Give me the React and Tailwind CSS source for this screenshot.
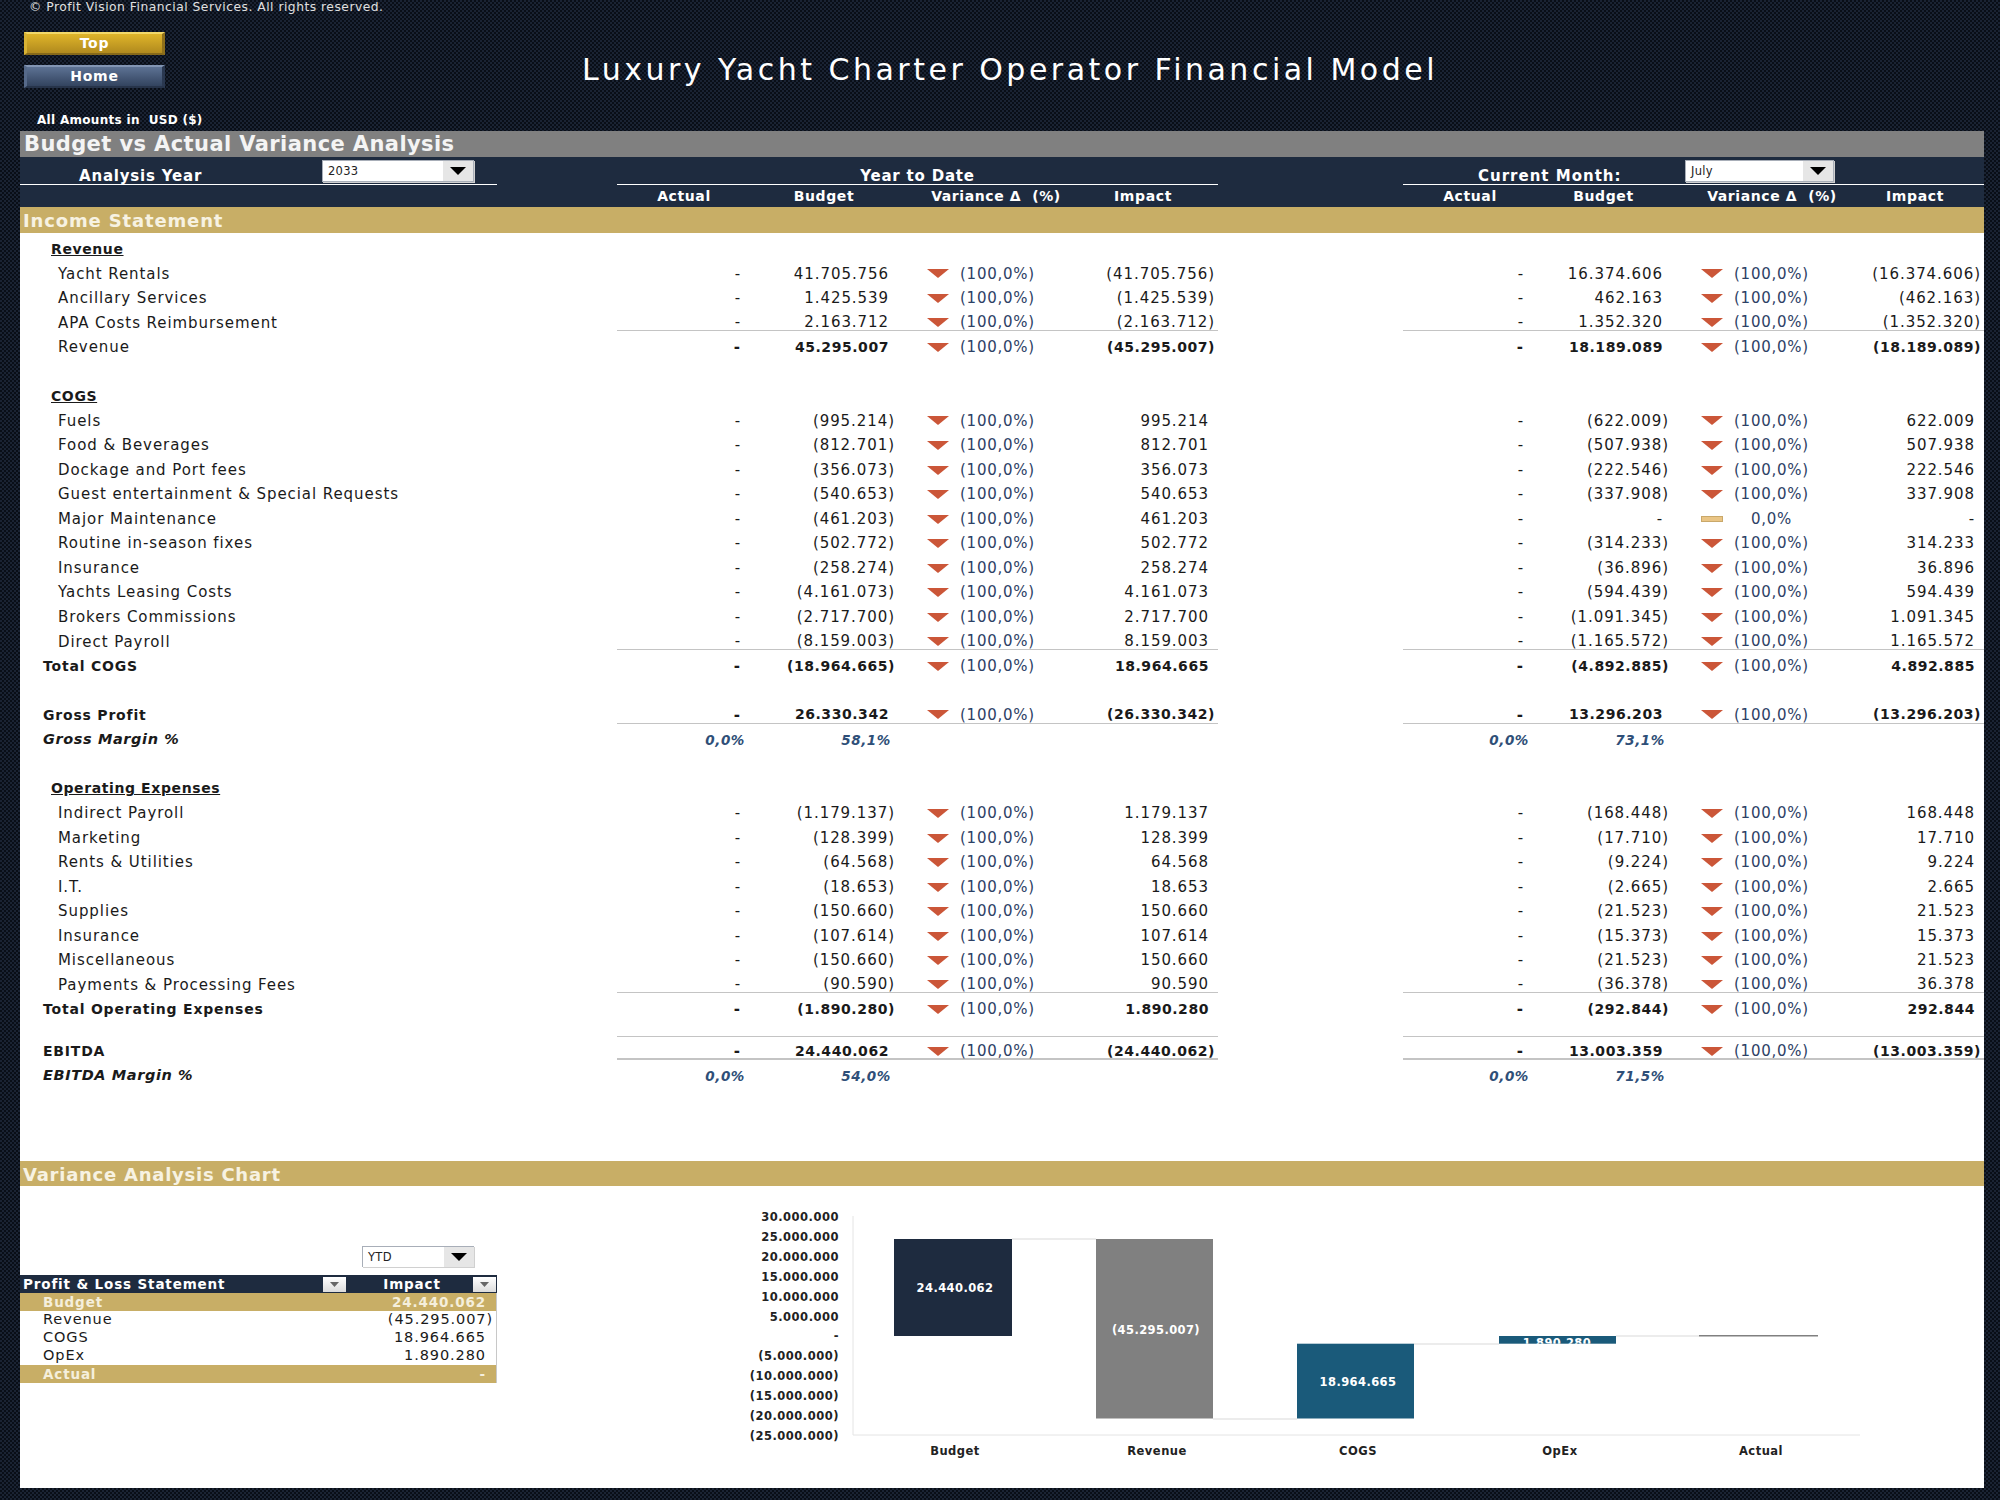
import React from "react";

const P = "(100,0%)";
const rev = [
  ["Yacht Rentals", "41.705.756", "(41.705.756)", "16.374.606", "(16.374.606)"],
  ["Ancillary Services", "1.425.539", "(1.425.539)", "462.163", "(462.163)"],
  ["APA Costs Reimbursement", "2.163.712", "(2.163.712)", "1.352.320", "(1.352.320)"],
];
const cogs = [
  ["Fuels", "(995.214)", "995.214", "(622.009)", "622.009"],
  ["Food & Beverages", "(812.701)", "812.701", "(507.938)", "507.938"],
  ["Dockage and Port fees", "(356.073)", "356.073", "(222.546)", "222.546"],
  ["Guest entertainment & Special Requests", "(540.653)", "540.653", "(337.908)", "337.908"],
  ["Major Maintenance", "(461.203)", "461.203", "-", "-", "zero"],
  ["Routine in-season fixes", "(502.772)", "502.772", "(314.233)", "314.233"],
  ["Insurance", "(258.274)", "258.274", "(36.896)", "36.896"],
  ["Yachts Leasing Costs", "(4.161.073)", "4.161.073", "(594.439)", "594.439"],
  ["Brokers Commissions", "(2.717.700)", "2.717.700", "(1.091.345)", "1.091.345"],
  ["Direct Payroll", "(8.159.003)", "8.159.003", "(1.165.572)", "1.165.572"],
];
const opex = [
  ["Indirect Payroll", "(1.179.137)", "1.179.137", "(168.448)", "168.448"],
  ["Marketing", "(128.399)", "128.399", "(17.710)", "17.710"],
  ["Rents & Utilities", "(64.568)", "64.568", "(9.224)", "9.224"],
  ["I.T.", "(18.653)", "18.653", "(2.665)", "2.665"],
  ["Supplies", "(150.660)", "150.660", "(21.523)", "21.523"],
  ["Insurance", "(107.614)", "107.614", "(15.373)", "15.373"],
  ["Miscellaneous", "(150.660)", "150.660", "(21.523)", "21.523"],
  ["Payments & Processing Fees", "(90.590)", "90.590", "(36.378)", "36.378"],
];

function Arrow() {
  return (
    <svg width="22" height="9" viewBox="0 0 22 9" className="shrink-0">
      <path d="M0 0 H22 L11 9 Z" fill="#cb5638" />
    </svg>
  );
}

function Var({ zero }) {
  return (
    <div className="flex items-center w-full pl-[32px] text-[15px] tracking-[0.75px] font-normal text-[#2d4165]">
      {zero ? (
        <div className="w-[22px] h-[6px] bg-[#eac585] border border-[#c9a86a] shrink-0" />
      ) : (
        <Arrow />
      )}
      <span className={zero ? "ml-[28px]" : "ml-[11px]"}>{zero ? "0,0%" : P}</span>
    </div>
  );
}

function Num({ v, w, end, bold }) {
  const paren = v.endsWith(")");
  return (
    <div
      className={`${w} text-right whitespace-nowrap ${bold ? "font-bold text-[14px] tracking-[0.55px]" : "text-[15px] tracking-[0.93px]"} ${
        paren ? (end ? "pr-[3px]" : "pr-0") : end ? "pr-[9px]" : "pr-[6px]"
      }`}
    >
      {v}
    </div>
  );
}

function Group({ width, cols, a, budget, impact, zero, bold, line }) {
  return (
    <div className={`flex h-full items-center pt-[8px] ${width} ${line || ""}`}>
      <div className={`${cols[0]} text-right pr-[7px] ${bold ? "font-bold" : ""}`}>{a}</div>
      <Num v={budget} w={cols[1]} bold={bold} />
      <div className={cols[2]}>
        <Var zero={zero} />
      </div>
      <Num v={impact} w={cols[3]} end bold={bold} />
    </div>
  );
}

const Y = ["w-[131px]", "w-[147px]", "w-[165px]", "w-[158px]"];
const M = ["w-[128px]", "w-[138px]", "w-[161px]", "w-[154px]"];

function Row({ r, kind, line }) {
  const [label, b, i, mb, mi, z] = r;
  const total = kind === "total";
  const bold = total || kind === "sum";
  return (
    <div className="flex h-[24.54px] text-[15px] tracking-[0.93px] text-[#1a1a1a]">
      <div
        className={`w-[597px] flex items-center pt-[8px] whitespace-nowrap ${
          total ? "pl-[23px] font-bold text-[14px] tracking-[0.8px]" : "pl-[38px]"
        }`}
      >
        {label}
      </div>
      <Group width="w-[601px]" cols={Y} a="-" budget={b} impact={i} bold={bold} line={line} />
      <div className="w-[185px]" />
      <Group width="w-[581px]" cols={M} a="-" budget={mb} impact={mi} zero={z === "zero"} bold={bold} line={line} />
    </div>
  );
}

function Head({ children }) {
  return (
    <div className="h-[24.54px] flex items-center pt-[8px] pl-[31px] font-bold underline text-[14px] tracking-[0.6px] text-[#1a1a1a]">
      {children}
    </div>
  );
}

function Margin({ label, a, b, ma, mb }) {
  const c = "font-bold italic text-[#2f4f78] text-right text-[13.5px] tracking-[0.6px]";
  return (
    <div className="flex h-[24.54px] items-center pt-[8px]">
      <div className="w-[597px] pl-[23px] font-bold italic text-[14.5px] tracking-[0.6px] text-[#1a1a1a]">{label}</div>
      <div className={`w-[128px] ${c}`}>{a}</div>
      <div className={`w-[146px] ${c}`}>{b}</div>
      <div className="w-[512px]" />
      <div className={`w-[126px] ${c}`}>{ma}</div>
      <div className={`w-[136px] ${c}`}>{mb}</div>
    </div>
  );
}

function Spacer() {
  return <div className="h-[24.54px]" />;
}

function Drop({ value, className }) {
  return (
    <div className={`flex bg-white border border-[#a8aeb8] shadow-[1px_1px_0_#d0d0d0] ${className}`}>
      <div className="flex-1 pl-[5px] text-[#222] text-[11.5px] tracking-[0.3px] leading-[21px]">{value}</div>
      <div className="w-[30px] bg-[#e6e6e6] flex items-center justify-center">
        <svg width="16" height="8" viewBox="0 0 16 8">
          <path d="M0 0 H16 L8 8 Z" fill="#000" />
        </svg>
      </div>
    </div>
  );
}

function Filter({ className }) {
  return (
    <div className={`w-[23px] h-[15px] bg-gradient-to-b from-white to-[#dcdcdc] flex items-center justify-center ${className || ""}`}>
      <svg width="9" height="5" viewBox="0 0 9 5">
        <path d="M0 0 H9 L4.5 5 Z" fill="#666" />
      </svg>
    </div>
  );
}

function Btn({ label, top }) {
  return (
    <div
      className={`w-[141px] h-[23px] flex items-center justify-center text-[14px] font-bold tracking-[0.8px] text-white border-t-2 border-b-2 border-l-[3px] border-r-[3px] ${
        top
          ? "bg-gradient-to-b from-[#e0b52a] to-[#b08a1e] border-t-[#f2d86a] border-b-[#86691a] border-l-[#d8b233] border-r-[#8f701b]"
          : "bg-gradient-to-b from-[#5d7294] to-[#33445f] border-t-[#8295b3] border-b-[#27344a] border-l-[#566a8a] border-r-[#2a3850]"
      }`}
    >
      {label}
    </div>
  );
}

const HY = ["w-[134px]", "w-[146px]", "w-[198px]", "w-[96px]"];
const HM = ["w-[134px]", "w-[133px]", "w-[204px]", "w-[82px]"];

function ColHeads({ cols, width }) {
  const names = ["Actual", "Budget", "Variance Δ  (%)", "Impact"];
  return (
    <div className={`flex ${width}`}>
      {names.map((n, i) => (
        <div key={n} className={`${cols[i]} text-center whitespace-pre`}>
          {n}
        </div>
      ))}
    </div>
  );
}

function Chart() {
  const ticks = ["30.000.000","25.000.000","20.000.000","15.000.000","10.000.000","5.000.000","-","(5.000.000)","(10.000.000)","(15.000.000)","(20.000.000)","(25.000.000)"];
  const O = 730, T = 1186;
  const bars = [
    [894, 1012, 1239, 1336, "#1e2b3f"],
    [1096, 1213, 1239, 1418.5, "#808080"],
    [1297, 1414, 1343.7, 1418.5, "#1a5a7a"],
    [1499, 1616, 1336, 1343.7, "#1a5a7a"],
  ];
  const links = [[1012,1096,1239],[1213,1297,1419],[1414,1499,1344],[1616,1699,1336]];
  const labels = [["24.440.062",955,1292],["(45.295.007)",1156,1334],["18.964.665",1358,1386]];
  const cats = [["Budget",955],["Revenue",1157],["COGS",1358],["OpEx",1560],["Actual",1761]];
  return (
    <svg width="1170" height="302" viewBox="0 0 1170 302" className="ml-[233px] shrink-0" style={{ fontFamily: "'DejaVu Sans', sans-serif" }}>
      <path d={`M${853-O} ${1216-T} V${1435-T} H${1860-O}`} fill="none" stroke="#e4e4e4" strokeWidth="1" />
      {links.map(([a,b,y],i)=>(<line key={i} x1={a-O} x2={b-O} y1={y-T} y2={y-T} stroke="#e6e6e6" strokeWidth="1.5" />))}
      {bars.map(([a,b,y1,y2,f],i)=>(<rect key={i} x={a-O} y={y1-T} width={b-a} height={y2-y1} fill={f} />))}
      <rect x={1699-O} y={1335-T} width={119} height={1.5} fill="#808080" />
      {ticks.map((t,i)=>(<text key={t} x={839-O} y={1221-T+i*19.9} textAnchor="end" fontSize="11.5" fontWeight="700" letterSpacing="0.5" fill="#222">{t}</text>))}
      {labels.map(([t,x,y])=>(<text key={t} x={x-O} y={y-T} textAnchor="middle" fontSize="11.5" fontWeight="700" letterSpacing="0.4" fill="#fff">{t}</text>))}
      <svg x={1499-O} y={1336-T} width={117} height={7.7}>
        <text x="58" y="11" textAnchor="middle" fontSize="11.5" fontWeight="700" letterSpacing="0.4" fill="#fff">1.890.280</text>
      </svg>
      {cats.map(([t,x])=>(<text key={t} x={x-O} y={1455-T} textAnchor="middle" fontSize="11.5" fontWeight="700" letterSpacing="0.5" fill="#222">{t}</text>))}
    </svg>
  );
}

function PL() {
  const row = "flex justify-between items-center h-[18px] pl-[23px]";
  const plain = "text-[14.5px] tracking-[0.9px] text-[#1a1a1a]";
  return (
    <div className="w-[477px] pt-[60px] text-[13.5px] tracking-[0.85px] shrink-0">
      <div className="flex justify-end pr-[23px] h-[21px] mb-[8px]">
        <Drop value="YTD" className="w-[112px] h-[21px] border-b-0 border-r-0" />
      </div>
      <div className="flex items-center h-[18px] bg-[#1e2b3f] text-white font-bold pl-[3px]">
        <div className="w-[300px] whitespace-nowrap">Profit &amp; Loss Statement</div>
        <Filter />
        <div className="w-[127px] text-center pl-[5px]">Impact</div>
        <Filter />
      </div>
      <div className="border-r border-[#c8c8c8]">
        <div className={`${row} bg-[#c8ae66] text-[#f5efdc] font-bold pr-[10px]`}><span>Budget</span><span>24.440.062</span></div>
        <div className={`${row} ${plain} pr-[3px]`}><span>Revenue</span><span>(45.295.007)</span></div>
        <div className={`${row} ${plain} pr-[10px]`}><span>COGS</span><span>18.964.665</span></div>
        <div className={`${row} ${plain} pr-[10px]`}><span>OpEx</span><span>1.890.280</span></div>
        <div className={`${row} bg-[#c8ae66] text-[#f5efdc] font-bold pr-[10px]`}><span>Actual</span><span>-</span></div>
      </div>
    </div>
  );
}

export default function App() {
  const totLine = "border-b border-[#c4c4c4]";
  return (
    <div
      className="w-[2000px] h-[1500px] overflow-hidden bg-[#121824] bg-[image:repeating-conic-gradient(#090e17_0_25%,#1a2333_0_50%)] bg-[length:4px_4px] text-white"
      style={{ fontFamily: "'DejaVu Sans', sans-serif" }}
    >
      <div className="h-[131px]">
        <div className="flex pl-[29px] h-[14px] items-center text-[12.3px] tracking-[0.5px] text-[#e0e0e0]">
          © Profit Vision Financial Services. All rights reserved.
        </div>
        <div className="flex">
          <div className="pl-[24px] pt-[18px] flex flex-col gap-[10px] w-[582px]">
            <Btn label="Top" top />
            <Btn label="Home" />
          </div>
          <div className="pt-[33px] text-[30px] tracking-[3.5px] whitespace-nowrap">
            Luxury Yacht Charter Operator Financial Model
          </div>
        </div>
        <div className="pl-[37px] pt-[19px] text-[12px] font-bold tracking-[0.3px] whitespace-pre">All Amounts in  USD ($)</div>
      </div>

      <div className="mx-[20px] w-[1964px]">
        <div className="h-[26px] bg-[#808080] flex items-center pl-[4px] pt-[1px] font-bold text-[21px] tracking-[0.4px] text-[#f4f4f4]">
          Budget vs Actual Variance Analysis
        </div>
        <div className="h-[50px] bg-[#1e2b3f] text-[15px] font-bold tracking-[0.8px]">
          <div className="flex h-[28px]">
            <div className="w-[477px] flex border-b-[1.5px] border-white items-start">
              <div className="w-[302px] pl-[59px] pt-[8px]">Analysis Year</div>
              <Drop value="2033" className="w-[152px] h-[22px] mt-[3px] font-normal" />
            </div>
            <div className="w-[120px]" />
            <div className="w-[601px] border-b-[1.5px] border-white text-center pt-[8px]">Year to Date</div>
            <div className="w-[185px]" />
            <div className="w-[581px] flex border-b-[1.5px] border-white items-start">
              <div className="w-[282px] pl-[75px] pt-[8px] whitespace-nowrap tracking-[1px]">Current Month:</div>
              <Drop value="July" className="w-[149px] h-[22px] mt-[3px] font-normal" />
            </div>
          </div>
          <div className="flex h-[22px] items-center pt-[1px] text-[14px] tracking-[0.6px]">
            <div className="w-[597px]" />
            <ColHeads cols={HY} width="w-[601px]" />
            <div className="w-[185px]" />
            <ColHeads cols={HM} width="w-[581px]" />
          </div>
        </div>
        <div className="h-[26px] bg-[#c8ae66] flex items-center pl-[3px] pt-[1px] font-bold text-[18px] tracking-[0.85px] text-[#f7f2e2]">
          Income Statement
        </div>

        <div className="h-[928px] bg-white">
          <Head>Revenue</Head>
          {rev.map((r, i) => (
            <Row key={r[0]} r={r} line={i === 2 ? totLine : ""} />
          ))}
          <Row r={["Revenue", "45.295.007", "(45.295.007)", "18.189.089", "(18.189.089)"]} kind="sum" />
          <Spacer />
          <Head>COGS</Head>
          {cogs.map((r, i) => (
            <Row key={r[0]} r={r} line={i === 9 ? totLine : ""} />
          ))}
          <Row r={["Total COGS", "(18.964.665)", "18.964.665", "(4.892.885)", "4.892.885"]} kind="total" />
          <Spacer />
          <Row r={["Gross Profit", "26.330.342", "(26.330.342)", "13.296.203", "(13.296.203)"]} kind="total" line={totLine} />
          <Margin label="Gross Margin %" a="0,0%" b="58,1%" ma="0,0%" mb="73,1%" />
          <Spacer />
          <Head>Operating Expenses</Head>
          {opex.map((r, i) => (
            <Row key={r[0] + i} r={r} line={i === 7 ? totLine : ""} />
          ))}
          <Row r={["Total Operating Expenses", "(1.890.280)", "1.890.280", "(292.844)", "292.844"]} kind="total" />
          <div className="h-[17.5px]" />
          <Row r={["EBITDA", "24.440.062", "(24.440.062)", "13.003.359", "(13.003.359)"]} kind="total" line="border-t border-b-2 border-[#c4c4c4]" />
          <Margin label="EBITDA Margin %" a="0,0%" b="54,0%" ma="0,0%" mb="71,5%" />
        </div>

        <div className="h-[25px] bg-[#c8ae66] flex items-center pl-[3px] pt-[1px] font-bold text-[18px] tracking-[0.75px] text-[#f7f2e2]">
          Variance Analysis Chart
        </div>
        <div className="h-[302px] bg-white flex">
          <PL />
          <Chart />
        </div>
      </div>
    </div>
  );
}
